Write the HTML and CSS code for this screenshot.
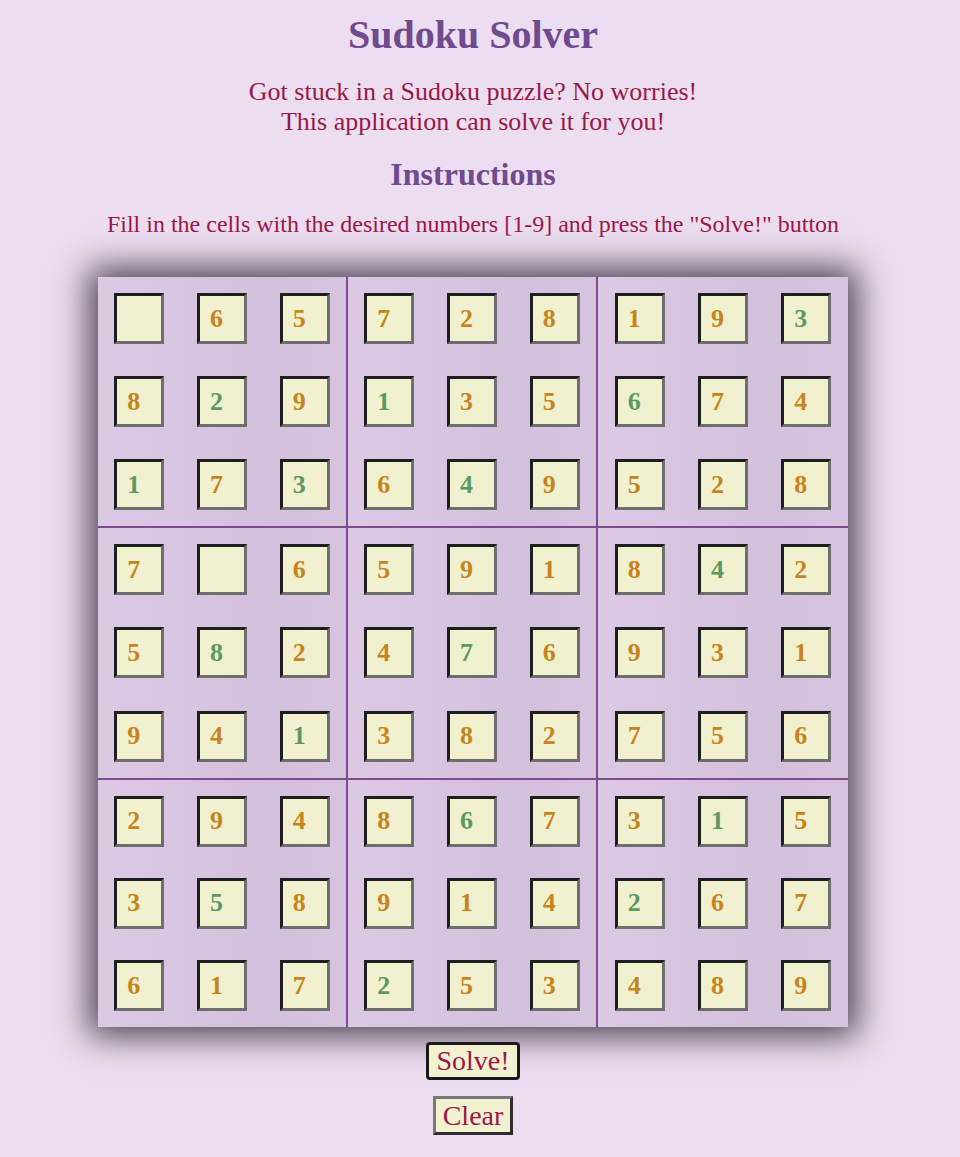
FILE: index.html
```html
<!DOCTYPE html>
<html lang="en">
<head>
<meta charset="utf-8">
<title>Sudoku Solver</title>
<link rel="stylesheet" href="styles.css">
</head>
<body>
<div class="page">
  <h1 class="title">Sudoku Solver</h1>
  <p class="intro">Got stuck in a Sudoku puzzle? No worries!<br>This application can solve it for you!</p>
  <h2 class="heading">Instructions</h2>
  <p class="instructions">Fill in the cells with the desired numbers [1-9] and press the "Solve!" button</p>

  <div class="board">
    <div class="box">
      <input class="cell" type="text" maxlength="1" value="">
      <input class="cell solved" type="text" maxlength="1" value="6">
      <input class="cell solved" type="text" maxlength="1" value="5">
      <input class="cell solved" type="text" maxlength="1" value="8">
      <input class="cell given" type="text" maxlength="1" value="2">
      <input class="cell solved" type="text" maxlength="1" value="9">
      <input class="cell given" type="text" maxlength="1" value="1">
      <input class="cell solved" type="text" maxlength="1" value="7">
      <input class="cell given" type="text" maxlength="1" value="3">
    </div>
    <div class="box">
      <input class="cell solved" type="text" maxlength="1" value="7">
      <input class="cell solved" type="text" maxlength="1" value="2">
      <input class="cell solved" type="text" maxlength="1" value="8">
      <input class="cell given" type="text" maxlength="1" value="1">
      <input class="cell solved" type="text" maxlength="1" value="3">
      <input class="cell solved" type="text" maxlength="1" value="5">
      <input class="cell solved" type="text" maxlength="1" value="6">
      <input class="cell given" type="text" maxlength="1" value="4">
      <input class="cell solved" type="text" maxlength="1" value="9">
    </div>
    <div class="box">
      <input class="cell solved" type="text" maxlength="1" value="1">
      <input class="cell solved" type="text" maxlength="1" value="9">
      <input class="cell given" type="text" maxlength="1" value="3">
      <input class="cell given" type="text" maxlength="1" value="6">
      <input class="cell solved" type="text" maxlength="1" value="7">
      <input class="cell solved" type="text" maxlength="1" value="4">
      <input class="cell solved" type="text" maxlength="1" value="5">
      <input class="cell solved" type="text" maxlength="1" value="2">
      <input class="cell solved" type="text" maxlength="1" value="8">
    </div>
    <div class="box">
      <input class="cell solved" type="text" maxlength="1" value="7">
      <input class="cell" type="text" maxlength="1" value="">
      <input class="cell solved" type="text" maxlength="1" value="6">
      <input class="cell solved" type="text" maxlength="1" value="5">
      <input class="cell given" type="text" maxlength="1" value="8">
      <input class="cell solved" type="text" maxlength="1" value="2">
      <input class="cell solved" type="text" maxlength="1" value="9">
      <input class="cell solved" type="text" maxlength="1" value="4">
      <input class="cell given" type="text" maxlength="1" value="1">
    </div>
    <div class="box">
      <input class="cell solved" type="text" maxlength="1" value="5">
      <input class="cell solved" type="text" maxlength="1" value="9">
      <input class="cell solved" type="text" maxlength="1" value="1">
      <input class="cell solved" type="text" maxlength="1" value="4">
      <input class="cell given" type="text" maxlength="1" value="7">
      <input class="cell solved" type="text" maxlength="1" value="6">
      <input class="cell solved" type="text" maxlength="1" value="3">
      <input class="cell solved" type="text" maxlength="1" value="8">
      <input class="cell solved" type="text" maxlength="1" value="2">
    </div>
    <div class="box">
      <input class="cell solved" type="text" maxlength="1" value="8">
      <input class="cell given" type="text" maxlength="1" value="4">
      <input class="cell solved" type="text" maxlength="1" value="2">
      <input class="cell solved" type="text" maxlength="1" value="9">
      <input class="cell solved" type="text" maxlength="1" value="3">
      <input class="cell solved" type="text" maxlength="1" value="1">
      <input class="cell solved" type="text" maxlength="1" value="7">
      <input class="cell solved" type="text" maxlength="1" value="5">
      <input class="cell solved" type="text" maxlength="1" value="6">
    </div>
    <div class="box">
      <input class="cell solved" type="text" maxlength="1" value="2">
      <input class="cell solved" type="text" maxlength="1" value="9">
      <input class="cell solved" type="text" maxlength="1" value="4">
      <input class="cell solved" type="text" maxlength="1" value="3">
      <input class="cell given" type="text" maxlength="1" value="5">
      <input class="cell solved" type="text" maxlength="1" value="8">
      <input class="cell solved" type="text" maxlength="1" value="6">
      <input class="cell solved" type="text" maxlength="1" value="1">
      <input class="cell solved" type="text" maxlength="1" value="7">
    </div>
    <div class="box">
      <input class="cell solved" type="text" maxlength="1" value="8">
      <input class="cell given" type="text" maxlength="1" value="6">
      <input class="cell solved" type="text" maxlength="1" value="7">
      <input class="cell solved" type="text" maxlength="1" value="9">
      <input class="cell solved" type="text" maxlength="1" value="1">
      <input class="cell solved" type="text" maxlength="1" value="4">
      <input class="cell given" type="text" maxlength="1" value="2">
      <input class="cell solved" type="text" maxlength="1" value="5">
      <input class="cell solved" type="text" maxlength="1" value="3">
    </div>
    <div class="box">
      <input class="cell solved" type="text" maxlength="1" value="3">
      <input class="cell given" type="text" maxlength="1" value="1">
      <input class="cell solved" type="text" maxlength="1" value="5">
      <input class="cell given" type="text" maxlength="1" value="2">
      <input class="cell solved" type="text" maxlength="1" value="6">
      <input class="cell solved" type="text" maxlength="1" value="7">
      <input class="cell solved" type="text" maxlength="1" value="4">
      <input class="cell solved" type="text" maxlength="1" value="8">
      <input class="cell solved" type="text" maxlength="1" value="9">
    </div>
  </div>

  <div class="actions">
    <button class="btn btn-solve" type="button">Solve!</button>
    <button class="btn btn-clear" type="button">Clear</button>
  </div>
</div>
</body>
</html>
```
FILE: styles.css
```css
html, body {
  margin: 0;
  padding: 0;
}

body {
  background: #ecdef0;
  font-family: "Liberation Serif", "Times New Roman", serif;
}

.page {
  width: 946px;
  padding-top: 12px;
  padding-bottom: 30px;
  text-align: center;
}

.title {
  margin: 0;
  font-size: 40px;
  line-height: 46px;
  font-weight: bold;
  color: #6f4a8e;
}

.intro {
  margin: 19px 0 0;
  font-size: 26px;
  line-height: 29.5px;
  color: #9b1746;
}

.heading {
  margin: 20px 0 0;
  font-size: 32px;
  line-height: 37px;
  font-weight: bold;
  color: #6f4a8e;
}

.instructions {
  margin: 17px 0 0;
  font-size: 24px;
  line-height: 28px;
  color: #9b1746;
}

.board {
  width: 750px;
  height: 750px;
  margin: 39px auto 0;
  display: grid;
  grid-template-columns: 248px 248px 250px;
  grid-template-rows: 249px 250px 247px;
  gap: 2px;
  background: #7b4a8f;
  box-shadow: 0 0 32px 9px rgba(35, 25, 40, 0.8);
}

.box {
  display: grid;
  grid-template-columns: repeat(3, 1fr);
  grid-template-rows: repeat(3, 1fr);
  place-items: center;
  background: linear-gradient(90deg, #dccae5 0%, #d3c0dc 70%, #d7c5e0 100%);
}

.cell {
  box-sizing: border-box;
  width: 50px;
  height: 51px;
  margin: 0;
  padding: 0 0 0 10px;
  border-style: solid;
  border-width: 3px;
  border-color: #1e1e1e #6e6e6e #6e6e6e #1e1e1e;
  background: #f2f1cf;
  font-family: "Liberation Serif", "Times New Roman", serif;
  font-size: 26px;
  font-weight: bold;
  text-align: left;
  outline: none;
}

.cell.solved {
  color: #c8841c;
}

.cell.given {
  color: #5a9a62;
}

.actions {
  display: flex;
  flex-direction: column;
  align-items: center;
  margin-top: 15px;
  gap: 16px;
}

.btn {
  margin: 0;
  padding: 0 7px;
  background: #f2f1d0;
  color: #9b1746;
  font-family: "Liberation Serif", "Times New Roman", serif;
  font-size: 28px;
  line-height: 32px;
  cursor: pointer;
}

.btn-solve {
  border: 3px solid #1a1a1a;
  border-radius: 4px;
}

.btn-clear {
  border-style: solid;
  border-width: 3px;
  border-color: #777777 #2e2e2e #2e2e2e #777777;
  border-radius: 0;
  line-height: 33px;
}
```
